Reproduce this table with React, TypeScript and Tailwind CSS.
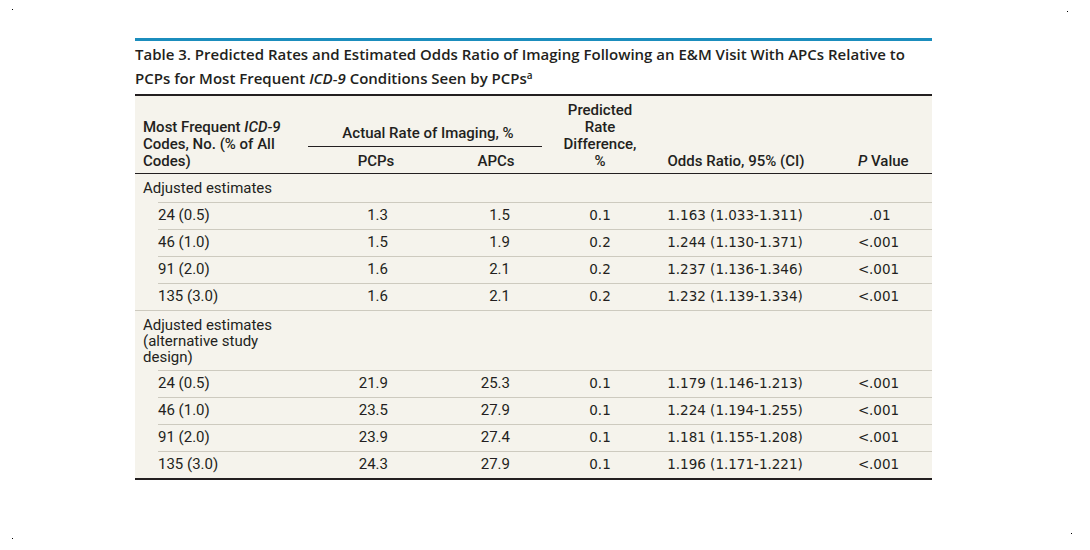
import React from "react";

type Row = { code: string; pcp: string; apc: string; diff: string; or: string; p: string };

interface Section {
  label: React.ReactNode;
  labelHeight: string;
  rows: Row[];
}

const sections: Section[] = [
  {
    label: "Adjusted estimates",
    labelHeight: "h-[28px]",
    rows: [
      { code: "24 (0.5)", pcp: "1.3", apc: "1.5", diff: "0.1", or: "1.163 (1.033-1.311)", p: ".01" },
      { code: "46 (1.0)", pcp: "1.5", apc: "1.9", diff: "0.2", or: "1.244 (1.130-1.371)", p: "<.001" },
      { code: "91 (2.0)", pcp: "1.6", apc: "2.1", diff: "0.2", or: "1.237 (1.136-1.346)", p: "<.001" },
      { code: "135 (3.0)", pcp: "1.6", apc: "2.1", diff: "0.2", or: "1.232 (1.139-1.334)", p: "<.001" },
    ],
  },
  {
    label: (
      <>
        Adjusted estimates
        <br />
        (alternative study
        <br />
        design)
      </>
    ),
    labelHeight: "h-[59px]",
    rows: [
      { code: "24 (0.5)", pcp: "21.9", apc: "25.3", diff: "0.1", or: "1.179 (1.146-1.213)", p: "<.001" },
      { code: "46 (1.0)", pcp: "23.5", apc: "27.9", diff: "0.1", or: "1.224 (1.194-1.255)", p: "<.001" },
      { code: "91 (2.0)", pcp: "23.9", apc: "27.4", diff: "0.1", or: "1.181 (1.155-1.208)", p: "<.001" },
      { code: "135 (3.0)", pcp: "24.3", apc: "27.9", diff: "0.1", or: "1.196 (1.171-1.221)", p: "<.001" },
    ],
  },
];

const cond = "font-['Roboto','Liberation_Sans',sans-serif] text-[15px]";
const verd = "font-['DejaVu_Sans','Verdana',sans-serif] text-[13.5px]";

const DataRow = ({ row }: { row: Row }) => {
  const lt = row.p.startsWith("<");
  return (
    <div className="ml-[23px] grid h-[27px] grid-cols-[147px_142px_98px_110px_160px_117px] items-center border-t border-[#cdcabf] pb-[2px] text-[#231f20]">
      <div className={cond}>{row.code}</div>
      <div className={`${cond} pr-[59px] text-right`}>{row.pcp}</div>
      <div className={`${cond} pr-[35px] text-right`}>{row.apc}</div>
      <div className={`${verd} text-center`}>{row.diff}</div>
      <div className={`${verd} text-center`}>{row.or}</div>
      <div className={`${verd} flex pl-[43px]`}>
        <span className="inline-block w-[11px]">{lt ? "<" : ""}</span>
        <span>{lt ? row.p.slice(1) : row.p}</span>
      </div>
    </div>
  );
};

export default function App() {
  return (
    <div className="relative h-[550px] w-[1090px] bg-white">
      {/* scan specks in the corners */}
      <span className="absolute left-[12px] top-[9px] h-px w-px bg-black" />
      <span className="absolute left-[1067px] top-[11px] h-px w-px bg-black" />
      <span className="absolute left-[12px] top-[538px] h-px w-px bg-black" />
      <span className="absolute left-[1071px] top-[533px] h-px w-px bg-black" />

      <div className="pl-[135px] pt-[38px]">
        <div className="w-[797px] text-[#231f20]">
          <div className="h-[3px] bg-[#1b8dbd]" />
          <h1 className="pt-[1px] pb-[4px] font-['Open_Sans','Lato',sans-serif] text-[15px] font-semibold leading-[24px]">
            Table 3. Predicted Rates and Estimated Odds Ratio of Imaging Following an E&amp;M Visit With APCs Relative to
            <br />
            PCPs for Most Frequent <i>ICD-9</i> Conditions Seen by PCPs
            <sup className="text-[10px]">a</sup>
          </h1>

          <div className="border-t-2 border-b-2 border-[#231f20] bg-[#f5f3ec]">
            {/* header */}
            <div
              className={`${cond} grid h-[78px] grid-cols-[170px_142px_98px_110px_160px_117px] items-end border-b border-[#231f20] pb-[3px] font-medium leading-[17px]`}
            >
              <div className="pl-[8px]">
                Most Frequent <i>ICD-9</i>
                <br />
                Codes, No. (% of All
                <br />
                Codes)
              </div>
              <div className="col-span-2 flex flex-col">
                <div className="mx-[3px] border-b border-[#231f20] pb-[4px] pl-[6px] text-center">Actual Rate of Imaging, %</div>
                <div className="mt-[6px] grid grid-cols-[142px_98px] text-center">
                  <div>PCPs</div>
                  <div>APCs</div>
                </div>
              </div>
              <div className="text-center">
                Predicted
                <br />
                Rate
                <br />
                Difference,
                <br />%
              </div>
              <div className="pl-[2px] text-center">Odds Ratio, 95% (CI)</div>
              <div className="pl-[43px]">
                <i>P</i> Value
              </div>
            </div>

            {sections.map((s, i) => (
              <div key={i} className={i < sections.length - 1 ? "border-b border-[#cdcabf]" : ""}>
                <div className={`${cond} ${s.labelHeight} flex items-center pl-[8px] leading-[16px]`}>
                  <div>{s.label}</div>
                </div>
                {s.rows.map((r, j) => (
                  <DataRow key={j} row={r} />
                ))}
              </div>
            ))}
          </div>
        </div>
      </div>
    </div>
  );
}
